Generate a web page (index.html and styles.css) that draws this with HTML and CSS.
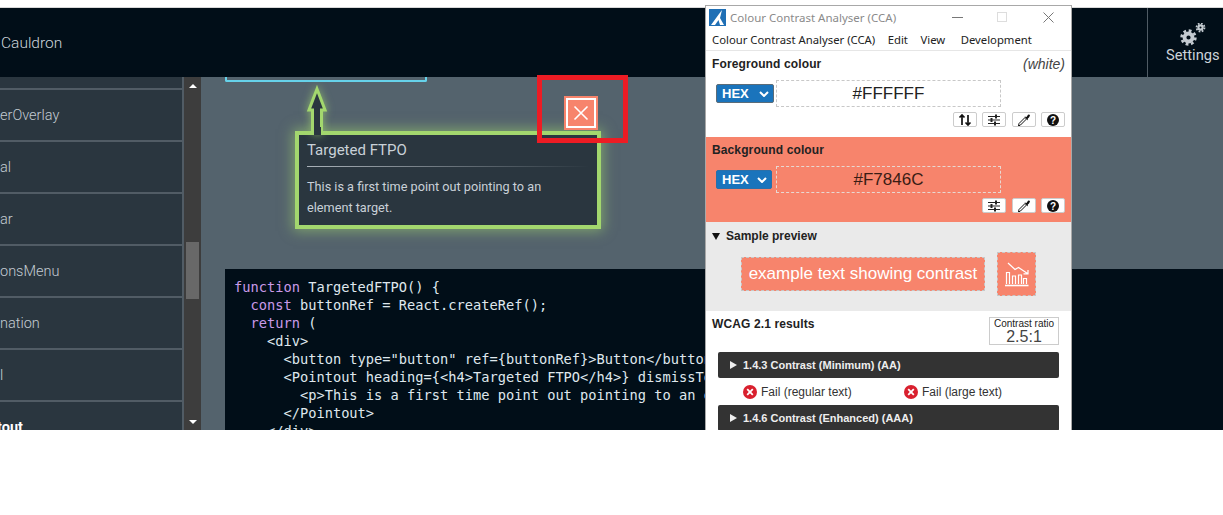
FILE: index.html
```html
<!DOCTYPE html>
<html lang="en">
<head>
<meta charset="utf-8">
<title>Cauldron</title>
<link rel="stylesheet" href="styles.css">
</head>
<body>
<div class="app">
  <header class="topbar">
    <div class="brand">Cauldron</div>
    <div class="settings">
      <svg class="gears" width="26" height="24" viewBox="0 0 26 24">
        <circle cx="8.5" cy="14.5" r="4" fill="none" stroke="#c4cbd1" stroke-width="3.8"/>
        <circle cx="8.5" cy="14.5" r="6.9" fill="none" stroke="#c4cbd1" stroke-width="2.6" stroke-dasharray="2.8 2.62"/>
        <circle cx="20.5" cy="4.5" r="2.1" fill="none" stroke="#c4cbd1" stroke-width="2.2"/>
        <circle cx="20.5" cy="4.5" r="4" fill="none" stroke="#c4cbd1" stroke-width="1.8" stroke-dasharray="1.7 1.44"/>
      </svg>
      <span>Settings</span>
    </div>
  </header>
  <div class="workspace">
    <nav class="sidebar">
      <div class="nav-list">
        <div class="nav-item nav-stub"></div>
        <div class="nav-item">erOverlay</div>
        <div class="nav-item">al</div>
        <div class="nav-item">ar</div>
        <div class="nav-item">onsMenu</div>
        <div class="nav-item">nation</div>
        <div class="nav-item">l</div>
        <div class="nav-item nav-active">tout</div>
      </div>
      <div class="scrollbar">
        <span class="arrow arrow-up"></span>
        <span class="thumb"></span>
        <span class="arrow arrow-down"></span>
      </div>
    </nav>
    <main class="content">
      <div class="target-box"></div>
      <div class="pointout">
        <svg class="pointer" width="22" height="51" viewBox="0 0 22 51">
          <path d="M11 5 L19 26 L15.5 26 L15.5 47 L6.5 47 L6.5 26 L3 26 Z" fill="#2a363f" stroke="#a3d76e" stroke-width="3"/>
          <rect x="8" y="43" width="7" height="8" fill="#2a363f"/>
        </svg>
        <button class="dismiss" type="button" aria-label="Close">
          <svg width="18" height="18" viewBox="0 0 18 18"><path d="M2.5 2.5 L15.5 15.5 M15.5 2.5 L2.5 15.5" stroke="#fff" stroke-width="1.6"/></svg>
        </button>
        <h4 class="pointout-title">Targeted FTPO</h4>
        <p class="pointout-text">This is a first time point out pointing to an element target.</p>
      </div>
      <pre class="code"><span class="kw">function</span> TargetedFTPO() {
  <span class="kw">const</span> buttonRef = React.createRef();
  <span class="kw">return</span> (
    &lt;div&gt;
      &lt;button type="button" ref={buttonRef}&gt;Button&lt;/button&gt;
      &lt;Pointout heading={&lt;h4&gt;Targeted FTPO&lt;/h4&gt;} dismissText="Close"
        &lt;p&gt;This is a first time point out pointing to an element
      &lt;/Pointout&gt;
    &lt;/div&gt;</pre>
    </main>
  </div>
  <div class="annotation"></div>
  <section class="cca">
    <div class="cca-title">
      <svg class="cca-logo" width="17" height="17" viewBox="0 0 17 17"><rect width="17" height="17" fill="#1f6fb5"/><path d="M2 16 L10 5 L13 1 L11 9 L15 16 L11 16 L9.5 11 L6 16 Z" fill="#fff"/></svg>
      <span class="cca-title-text">Colour Contrast Analyser (CCA)</span>
      <span class="win-btn win-min"></span>
      <span class="win-btn win-max"></span>
      <svg class="win-close" width="11" height="11" viewBox="0 0 11 11"><path d="M.5 .5 L10.5 10.5 M10.5 .5 L.5 10.5" stroke="#777" fill="none"/></svg>
    </div>
    <div class="cca-menu"><span>Colour Contrast Analyser (CCA)</span><span>Edit</span><span>View</span><span>Development</span></div>
    <div class="panel panel-fg">
      <div class="panel-head"><strong>Foreground colour</strong><em>(white)</em></div>
      <div class="color-row">
        <span class="format format-fg">HEX<svg width="10" height="6" viewBox="0 0 10 6"><path d="M1 1 L5 5 L9 1" stroke="#fff" stroke-width="2" fill="none"/></svg></span>
        <span class="hex">#FFFFFF</span>
      </div>
      <div class="tools">
        <span class="tool"><svg width="14" height="12" viewBox="0 0 14 12"><path d="M4 11 V1 M1.5 3.5 L4 1 L6.5 3.5 M10 1 V11 M7.5 8.5 L10 11 L12.5 8.5" stroke="#111" stroke-width="1.7" fill="none"/></svg></span>
        <span class="tool"><svg class="sliders" width="14" height="12" viewBox="0 0 14 12"><use href="#sliders"/></svg></span>
        <span class="tool"><svg width="14" height="12" viewBox="0 0 14 12"><use href="#dropper"/></svg></span>
        <span class="tool"><svg width="12" height="12" viewBox="0 0 12 12"><use href="#help"/></svg></span>
      </div>
    </div>
    <div class="panel panel-bg">
      <div class="panel-head"><strong>Background colour</strong></div>
      <div class="color-row">
        <span class="format format-bg">HEX<svg width="10" height="6" viewBox="0 0 10 6"><path d="M1 1 L5 5 L9 1" stroke="#fff" stroke-width="2" fill="none"/></svg></span>
        <span class="hex hex-bg">#F7846C</span>
      </div>
      <div class="tools">
        <span class="tool"><svg width="14" height="12" viewBox="0 0 14 12"><use href="#sliders"/></svg></span>
        <span class="tool"><svg width="14" height="12" viewBox="0 0 14 12"><use href="#dropper"/></svg></span>
        <span class="tool"><svg width="12" height="12" viewBox="0 0 12 12"><use href="#help"/></svg></span>
      </div>
    </div>
    <div class="preview">
      <div class="preview-head"><i class="tri-down"></i><strong>Sample preview</strong></div>
      <div class="preview-row">
        <span class="sample-text">example text showing contrast</span>
        <span class="sample-icon">
          <svg width="25" height="25" viewBox="0 0 25 25"><path d="M1 23.5 H24.5" stroke="#fff" stroke-width="1.6" fill="none"/><path d="M2.5 22 V10.5 H5.5 V22 M8.5 22 V14 H11.5 V22 M14.5 22 V13 H17.5 V22 M19.5 22 V16.5 H22.5 V22 M4 1 L11 7.5 L14.5 5.5 L23.5 11.5 M19.5 11.8 H24 V8" stroke="#fff" stroke-width="1.2" fill="none"/></svg>
        </span>
      </div>
    </div>
    <div class="results">
      <div class="results-head">
        <strong>WCAG 2.1 results</strong>
        <div class="ratio"><span class="ratio-label">Contrast ratio</span><span class="ratio-value">2.5:1</span></div>
      </div>
      <div class="criterion"><i class="tri-right"></i>1.4.3 Contrast (Minimum) (AA)</div>
      <div class="verdicts">
        <span class="verdict"><svg width="14" height="14" viewBox="0 0 14 14"><use href="#fail"/></svg>Fail (regular text)</span>
        <span class="verdict"><svg width="14" height="14" viewBox="0 0 14 14"><use href="#fail"/></svg>Fail (large text)</span>
      </div>
      <div class="criterion"><i class="tri-right"></i>1.4.6 Contrast (Enhanced) (AAA)</div>
    </div>
  </section>
</div>
<svg class="defs" width="0" height="0" aria-hidden="true">
  <defs>
    <g id="sliders"><path d="M1 2.5 H13 M1 6 H13 M1 9.5 H13" stroke="#222" stroke-width="1.2" fill="none"/><path d="M9 .5 V4.5 M4.5 4 V8 M8 7.5 V11.5" stroke="#222" stroke-width="2" fill="none"/></g>
    <g id="dropper"><path d="M1.5 12 L2 9.5 L8 3.5 L9.5 5 L3.5 11 Z" fill="#fff" stroke="#111"/><path d="M7.5 2.5 L9.5 3 L11 .8 Q12.6 .2 13 1.6 L12 3.6 L10.8 4.6 L10.8 6.4 Z" fill="#111"/></g>
    <g id="help"><circle cx="6" cy="6" r="6" fill="#111"/><text x="6" y="9.5" text-anchor="middle" class="help-mark">?</text></g>
    <g id="fail"><circle cx="7" cy="7" r="7" fill="#d9202e"/><path d="M4.2 4.2 L9.8 9.8 M9.8 4.2 L4.2 9.8" stroke="#fff" stroke-width="1.8"/></g>
  </defs>
</svg>
</body>
</html>
```

FILE: styles.css
```css
* { box-sizing: border-box; }
html, body { margin: 0; padding: 0; background: #fff; overflow: hidden; }
body { height: 515px; padding-top: 7px; font-family: Roboto, "Liberation Sans", sans-serif; }
.defs { position: absolute; }
.help-mark { font: bold 10px "Liberation Sans", sans-serif; fill: #fff; }

.app { position: relative; height: 423px; border-top: 1px solid #d8d8d8; display: flex; flex-direction: column; }

.topbar { height: 69px; flex: none; background: #010e18; color: #ccd3da; display: flex; justify-content: space-between; align-items: stretch; }
.brand { align-self: center; padding-left: 1px; font-size: 15.5px; font-weight: 300; }
.settings { width: 76px; border-left: 1px solid #4f5b64; display: flex; flex-direction: column; align-items: flex-start; padding: 15px 0 0 18px; font-size: 14.7px; line-height: 17px; }
.gears { display: block; margin-left: 14px; }

.workspace { flex: 1; display: flex; min-height: 0; overflow: hidden; }
.sidebar { width: 201px; flex: none; display: flex; background: #2a363f; }
.nav-list { width: 184px; flex: none; border-right: 2px solid #515c65; overflow: hidden; }
.nav-item { height: 52px; border-bottom: 2px solid #515c65; color: #c4ccd3; font-size: 14.5px; font-weight: 300; display: flex; align-items: center; padding-top: 1px; }
.nav-stub { height: 13px; }
.nav-active { font-weight: 700; color: #fff; text-indent: -3px; }
.scrollbar { flex: 1; background: #3d3d3d; position: relative; }
.arrow { position: absolute; left: 5px; width: 0; height: 0; border-left: 4px solid transparent; border-right: 4px solid transparent; }
.arrow-up { top: 7px; border-bottom: 4px solid #fff; }
.arrow-down { bottom: 6px; border-top: 4px solid #fff; }
.thumb { position: absolute; top: 165px; left: 2px; width: 13px; height: 57px; background: #686868; }

.content { flex: 1; min-width: 0; background: #54636d; padding-left: 24px; overflow: hidden; }
.target-box { width: 202px; height: 5px; border: 2px solid #66d2ea; border-top: 0; border-radius: 0 0 2px 2px; }
.pointout { position: relative; width: 306px; height: 98px; margin: 49px 0 0 70px; background: #2a363f; border: 4px solid #a3d76e; box-shadow: 0 0 12px 2px rgba(163, 215, 110, .55); color: #c9d1d8; padding: 7px 8px 0 8px; }
.pointer { position: absolute; left: 7px; top: -51px; filter: drop-shadow(0 0 4px rgba(163, 215, 110, .7)); }
.dismiss { position: absolute; top: -39px; right: -1px; width: 34px; height: 34px; padding: 0; background: #f7846c; border: 2px solid #f7846c; outline: 2px solid #fff; outline-offset: -4px; display: flex; align-items: center; justify-content: center; }
.pointout-title { margin: 0; padding-bottom: 7px; font-size: 15px; line-height: 17px; font-weight: 400; border-bottom: 1px solid; border-image: linear-gradient(to right, #aab2b9, #2a363f) 1; }
.pointout-text { margin: 9px 0 0; padding-right: 20px; font-size: 12.7px; line-height: 21px; font-weight: 400; }

.code { margin: 40px 0 0; padding: 9px; background: #010e18; color: #dfe7ed; font: 13.7px/18px "DejaVu Sans Mono", monospace; overflow: hidden; height: 200px; }
.kw { color: #c99ae8; }

.annotation { position: absolute; left: 537px; top: 67px; width: 91px; height: 68px; border: 5px solid #ed1c24; }

.cca { position: absolute; left: 705px; top: -3px; width: 367px; height: 425px; background: #fff; border: 1px solid #a8a8a8; border-bottom: 0; font-family: "Liberation Sans", Arial, sans-serif; color: #222; overflow: hidden; }
.cca-title { height: 27px; display: flex; align-items: center; padding: 0 0 5px 3px; font: 11.5px "Noto Sans", sans-serif; color: #8a8a8a; }
.cca-title-text { margin-left: 4px; flex: 1; }
.win-btn { display: block; }
.win-min { width: 11px; height: 1px; background: #777; margin-right: 34px; }
.win-max { width: 10px; height: 10px; border: 1px solid #ddd; margin-right: 36px; }
.win-close { margin-right: 17px; }
.cca-menu { height: 18px; display: flex; gap: 12.5px; padding-left: 6px; font: 11.3px/13px "Noto Sans", sans-serif; color: #222; border-bottom: 1px solid #e6e6e6; }
.cca-menu span:last-child { margin-left: 3px; }
.panel { padding: 6px 6px 0 6px; }
.panel-fg { height: 86px; }
.panel-bg { height: 85px; background: #f7846c; }
.panel-head { display: flex; justify-content: space-between; font-size: 12px; line-height: 14px; height: 16px; letter-spacing: .12px; }
.panel-head em { font-size: 14px; color: #444; letter-spacing: 0; }
.color-row { display: flex; align-items: center; margin: 7px 0 0 4px; }
.format { display: flex; align-items: center; justify-content: space-between; height: 19px; padding: 0 4px 0 5px; background: #1a74bc; border: 1px solid #5b6c78; border-radius: 2px; color: #fff; font-size: 13px; font-weight: 700; }
.format-fg { width: 58px; }
.format-bg { width: 56px; margin-right: 2px; border-color: #2a6fa8; }
.hex { width: 225px; height: 27px; line-height: 25px; border: 1px dashed #c8c8c8; font-size: 17px; text-align: center; color: #222; margin-left: 2px; }
.hex-bg { border-color: #e8d8d2; color: #3a1c14; }
.tools { display: flex; justify-content: flex-end; gap: 5.5px; margin-top: 5px; }
.tool { width: 24px; height: 15px; background: #fff; border: 1px solid #ccc; border-radius: 2px; display: flex; align-items: center; justify-content: center; }
.preview { height: 89px; background: #eaeaea; padding: 7px 6px 0; }
.preview-head { display: flex; align-items: center; gap: 6px; font-size: 12px; line-height: 14px; }
.tri-down { width: 0; height: 0; border-left: 4px solid transparent; border-right: 4px solid transparent; border-top: 7px solid #111; }
.preview-row { display: flex; align-items: center; margin: 9px 0 0 29px; gap: 12px; }
.sample-text { width: 244px; height: 34px; line-height: 32px; text-align: center; background: #f7846c; border: 1px dashed #c8c8c8; color: #fff; font-size: 17px; }
.sample-icon { width: 39px; height: 44px; background: #f7846c; border: 1px dashed #c8c8c8; display: flex; align-items: center; justify-content: center; }
.results { padding: 6px 12px 0 6px; }
.results-head { display: flex; justify-content: space-between; height: 35px; font-size: 12px; line-height: 14px; letter-spacing: .12px; }
.ratio { width: 70px; height: 28px; border: 1px solid #ccc; display: flex; flex-direction: column; align-items: center; letter-spacing: 0; }
.ratio-label { font-size: 10px; line-height: 11px; }
.ratio-value { font-size: 16px; line-height: 16px; color: #444; }
.criterion { margin-left: 6px; height: 26px; background: #333; border-radius: 2px; color: #eee; font-size: 11px; font-weight: 700; display: flex; align-items: center; padding-left: 12px; }
.tri-right { width: 0; height: 0; margin-right: 6px; border-top: 4px solid transparent; border-bottom: 4px solid transparent; border-left: 7px solid #eee; }
.verdicts { height: 27px; display: flex; align-items: center; padding-left: 31px; font-size: 12px; color: #333; }
.verdict { width: 161px; flex: none; display: flex; align-items: center; gap: 4px; }
```
